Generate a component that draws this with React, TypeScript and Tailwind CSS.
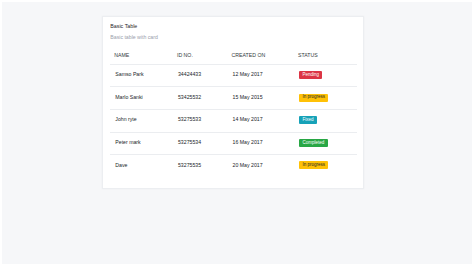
const rows = [
  { name: 'Samso Park', id: '34424433', date: '12 May 2017', status: 'Pending' },
  { name: 'Marlo Sanki', id: '53425532', date: '15 May 2015', status: 'In progress' },
  { name: 'John ryte', id: '53275533', date: '14 May 2017', status: 'Fixed' },
  { name: 'Peter mark', id: '53275534', date: '16 May 2017', status: 'Completed' },
  { name: 'Dave', id: '53275535', date: '20 May 2017', status: 'In progress' },
];

const badgeStyles: Record<string, string> = {
  Pending: 'bg-[#dc3545] text-white',
  'In progress': 'bg-[#ffc107] text-[#212529]',
  Fixed: 'bg-[#17a2b8] text-white',
  Completed: 'bg-[#28a745] text-white',
};

const cols = 'grid grid-cols-[62.7px_54.6px_66.4px_63px]';

function Badge({ status }: { status: string }) {
  return (
    <span
      className={`inline-flex h-[8px] items-center rounded-[1px] px-[3.5px] text-[4.5px] leading-none ${badgeStyles[status]}`}
    >
      {status}
    </span>
  );
}

export default function App() {
  return (
    <div className="h-[266px] w-[474px] bg-white p-[2px] font-['Liberation_Sans',Arial,sans-serif] text-[#212529]">
      <div className="h-full w-full bg-[#f6f7f9] pt-[13.7px] pl-[100.3px]">
        <div className="h-[173.3px] w-[262px] border border-[#eceef1] bg-white px-[7px] pt-[6.5px] shadow-[0_0_2px_rgba(0,0,0,0.04)]">
          <div className="h-[6px] text-[5.3px] leading-[6px] text-[#1f2328]">Basic Table</div>
          <div className="mt-[5.3px] h-[6px] text-[5.2px] leading-[6px] text-[#9aa0ac]">Basic table with card</div>

          <div className="mt-[7px] w-[246.7px] text-[5.2px]">
            <div className={`${cols} h-[16.3px] items-center text-[#343a40]`}>
              <div className="pl-[4px]">NAME</div>
              <div className="pl-[4px]">ID NO.</div>
              <div className="pl-[4px]">CREATED ON</div>
              <div className="pl-[4px]">STATUS</div>
            </div>

            {rows.map((r) => (
              <div key={r.id} className={`${cols} h-[22.6px] border-t border-[#ebedf0] pt-[6.4px]`}>
                <div className="h-[6px] pl-[5px] leading-[6px]">{r.name}</div>
                <div className="h-[6px] pl-[5px] leading-[6px]">{r.id}</div>
                <div className="h-[6px] pl-[5px] leading-[6px]">{r.date}</div>
                <div className="-mt-[0.4px] pl-[5px]">
                  <Badge status={r.status} />
                </div>
              </div>
            ))}
          </div>
        </div>
      </div>
    </div>
  );
}
